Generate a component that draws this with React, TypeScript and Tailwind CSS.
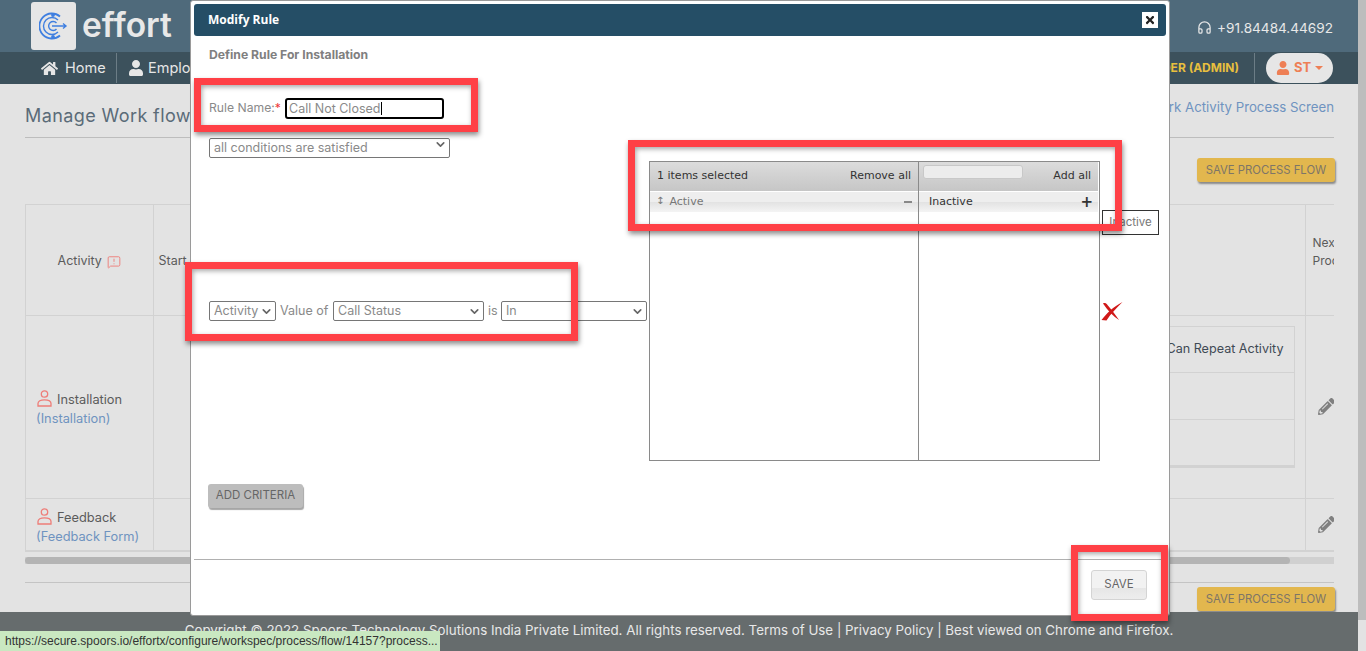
import React from "react";
import { FaHome, FaUser, FaPencilAlt, FaTimes } from "react-icons/fa";
import { Headphones, MessageSquareWarning, ChevronDown } from "lucide-react";

const font = "font-['Inter','Noto_Sans',sans-serif]";

function Logo() {
  return (
    <div className="w-[45px] h-[48px] bg-[#e6e6e6] rounded-[3px] flex items-center justify-center">
      <svg width="30" height="32" viewBox="0 0 30 32" fill="none" stroke="#3f7fe0" strokeWidth="1.4">
        <path d="M21 6.5A12.5 12.5 0 1 0 21 25.5" strokeWidth="1.8" />
        <path d="M19 10A8.5 8.5 0 1 0 19 22" />
        <path d="M17.5 13A4.5 4.5 0 1 0 17.5 19" />
        <path d="M13 16H27M24 13.5L27 16L24 18.5" />
        <circle cx="14" cy="5" r="1.2" fill="#3f7fe0" />
        <circle cx="14" cy="27" r="1.2" fill="#3f7fe0" />
      </svg>
    </div>
  );
}

function Sel({ label, w }: { label: string; w: string }) {
  return (
    <div className={`relative ${w}`}>
      <select
        defaultValue={label}
        className={`appearance-none w-full h-[20px] bg-white border border-[#767676] rounded-[2px] pl-[4px] text-[12.5px] leading-[18px] text-[#8a8a8a] outline-none ${font}`}
      >
        <option>{label}</option>
      </select>
      <ChevronDown size={13} strokeWidth={3} className="absolute right-[3px] top-[4px] text-[#666] pointer-events-none" />
    </div>
  );
}

function Mark({ cls }: { cls: string }) {
  return <div className={`absolute border-[7px] border-[#ff4046] shadow-[1px_3px_5px_rgba(0,0,0,0.45),inset_1px_2px_5px_rgba(0,0,0,0.35)] pointer-events-none ${cls}`} />;
}

function SaveFlow() {
  return (
    <button className="h-[24px] w-[138px] bg-[#e2b74e] rounded-[3px] text-[11.3px] text-[#7d7568] shadow-[1px_2px_2px_rgba(0,0,0,0.4)] whitespace-nowrap">
      SAVE PROCESS FLOW
    </button>
  );
}

function PersonIcon() {
  return (
    <svg width="15" height="17" viewBox="0 0 15 17" fill="none" stroke="#ee7d78" strokeWidth="1.3" className="mb-[2px]">
      <circle cx="7.5" cy="4" r="3.2" />
      <path d="M1 16V13.5C1 11 3.5 9.8 7.5 9.8C11.5 9.8 14 11 14 13.5V16Z" />
    </svg>
  );
}

function ActivityCell({ name, form }: { name: string; form: string }) {
  return (
    <div className="pl-[11px] text-[12.8px] leading-[19px]">
      <div className="flex items-end gap-[5px] text-[#5b5b5b]">
        <PersonIcon />
        <span>{name}</span>
      </div>
      <div className="text-[#6f93c0] text-[12.8px] -ml-px">({form})</div>
    </div>
  );
}

export default function App() {
  return (
    <div className={`relative w-[1366px] h-[651px] overflow-hidden bg-[#e3e3e3] flex ${font}`}>
      <div className="flex-1 min-w-0 flex flex-col">
        <header className="h-[52px] shrink-0 bg-[#4f6a7b] flex items-center justify-between pl-[31px] pr-[25px]">
          <div className="flex items-center gap-[7px]">
            <Logo />
            <span className="text-[33.5px] font-semibold text-[#e8e8e8] leading-none -ml-px">effort</span>
          </div>
          <div className="flex items-center gap-[5px] text-[13.6px] text-[#e8e8e8] pt-[4px]">
            <Headphones size={15} />
            <span>+91.84484.44692</span>
          </div>
        </header>

        <nav className="h-[32px] shrink-0 bg-[#3c515c] flex items-center justify-between pl-[41px] pr-[25px] text-[14.5px] text-[#e6e6e6]">
          <div className="flex items-center">
            <FaHome size={17} className="mr-[7px]" />
            <span className="w-[51px]">Home</span>
            <span className="w-px h-[30px] bg-[#6c7d86] mr-[11px]" />
            <FaUser size={16} className="mr-[4px]" />
            <span>Employee</span>
          </div>
          <div className="flex items-center">
            <span className="text-[12px] font-bold text-[#e8bf3e] mr-[15px]">LEADER (ADMIN)</span>
            <span className="w-px h-[30px] bg-[#6c7d86] mr-[11px]" />
            <span className="w-[67px] h-[30px] rounded-full bg-[#e6e6e6] flex items-center justify-center gap-[4px] text-[#ee7f55] font-bold text-[13px]">
              <FaUser size={14} />
              <span>ST</span>
              <span className="w-0 h-0 border-x-[4px] border-x-transparent border-t-[4px] border-t-[#ee7f55]" />
            </span>
          </div>
        </nav>

        <main className="flex-1 min-h-0 flex flex-col px-[25px] pr-[24px]">
          <div className="h-[54px] shrink-0 border-b border-[#bdbdbd] flex justify-between pt-[13px]">
            <h1 className="text-[18px] text-[#5a6b78] tracking-[0.4px] pt-[7px] leading-[24px]">Manage Work flow</h1>
            <span className="text-[13.25px] text-[#6f93c0] leading-[20px]">Work Activity Process Screen</span>
          </div>
          <div className="h-[66px] shrink-0 flex justify-end pt-[20px] -mr-px">
            <SaveFlow />
          </div>

          <div className="h-[348px] shrink-0 overflow-hidden border-t border-l border-[#d2d2d2]">
            <table className="table-fixed w-[1340px] border-collapse text-[12.5px] text-[#5b5b5b]">
              <colgroup>
                <col className="w-[127px]" />
                <col className="w-[847px]" />
                <col className="w-[305px]" />
                <col className="w-[61px]" />
              </colgroup>
              <tbody>
                <tr className="h-[110px] border-b border-[#d2d2d2]">
                  <td className="border-r border-[#d2d2d2] text-center pt-[4px]">
                    <span className="inline-flex items-center gap-[5px]">
                      Activity
                      <MessageSquareWarning size={14} strokeWidth={1.6} className="text-[#ee7d78]" />
                    </span>
                  </td>
                  <td className="pl-[5px] pt-[4px]">Start</td>
                  <td />
                  <td className="border-l border-[#d2d2d2] pl-[7px] pr-[8px] pb-[16px] leading-[18px] text-[12px] text-left">Next Process</td>
                </tr>
                <tr className="h-[183px] border-b border-[#d2d2d2]">
                  <td className="border-r border-[#d2d2d2] pt-[5px]">
                    <ActivityCell name="Installation" form="Installation" />
                  </td>
                  <td />
                  <td className="pr-[10px] align-top pt-[10px]">
                    <div className="border border-[#d2d2d2] border-b-[3px] h-[142px] flex flex-col text-[#3f4a55]">
                      <div className="h-[46px] border-b border-[#d2d2d2] flex items-center justify-end pr-[10px] text-[12.6px]">Can Repeat Activity</div>
                      <div className="h-[47px] border-b border-[#d2d2d2]" />
                      <div className="flex-1" />
                    </div>
                  </td>
                  <td className="border-l border-[#d2d2d2] pl-[12px]">
                    <FaPencilAlt size={17} className="text-[#808080]" />
                  </td>
                </tr>
                <tr className="h-[52px]">
                  <td className="border-r border-[#d2d2d2] pt-[6px]">
                    <ActivityCell name="Feedback" form="Feedback Form" />
                  </td>
                  <td />
                  <td />
                  <td className="border-l border-[#d2d2d2] pl-[12px]">
                    <FaPencilAlt size={17} className="text-[#808080]" />
                  </td>
                </tr>
              </tbody>
            </table>
          </div>
          <div className="h-[2px] shrink-0 bg-[#d2d2d2] -mt-[2px]" />
          <div className="mt-[5px] h-[7px] shrink-0 bg-[#d0d0d0]">
            <div className="h-full w-[1265px] rounded-full bg-[#b4b4b4]" />
          </div>
          <div className="mt-[18px] h-px shrink-0 bg-[#c4c4c4]" />
          <div className="mt-[4px] shrink-0 flex justify-end -mr-px">
            <SaveFlow />
          </div>
        </main>

        <footer className="h-[39px] shrink-0 bg-[#666c6d] text-[13.35px] text-[#e8e8e8] text-center pt-[8px] whitespace-nowrap">
          Copyright © 2022 Spoors Technology Solutions India Private Limited. All rights reserved. Terms of Use | Privacy Policy | Best viewed on Chrome and Firefox.
        </footer>
      </div>

      <div className="w-[8px] shrink-0 bg-[#e3e3e3] flex flex-col">
        <div className="h-[620px] bg-[#bdbdbd]" />
      </div>

      {/* Modal */}
      <div className="absolute left-[190px] top-0 w-[980px] h-[616px] bg-white border border-[#9a9a9a] rounded-[3px] px-[3px] pt-[3px] flex flex-col">
        <div className="h-[32px] shrink-0 bg-[#254e66] rounded-[3px] flex items-center justify-between pl-[14px] pr-[8px]">
          <span className="text-[12px] font-bold text-white font-['Open_Sans',sans-serif]">Modify Rule</span>
          <span className="w-[16px] h-[16px] bg-white flex items-center justify-center">
            <FaTimes size={12} className="text-[#222]" />
          </span>
        </div>

        <div className="flex-1 min-h-0 pl-[15px] flex flex-col">
          <div className="mt-[10px] text-[12.2px] font-bold text-[#808080] leading-[18px]">Define Rule For Installation</div>
          <div className="mt-[34px] flex items-center text-[12.2px] text-[#8a8a8a] h-[21px]">
            <span className="w-[76px] whitespace-nowrap">Rule Name:<span className="text-[#e33]">*</span></span>
            <div className="relative w-[159px]">
              <input
                defaultValue="Call Not Closed"
                className={`w-full h-[21px] border-2 border-black rounded-[3px] px-[2px] text-[12.5px] text-[#8a8a8a] outline-none ${font}`}
              />
              <span className="absolute left-[96px] top-[4px] w-px h-[13px] bg-black" />
            </div>
          </div>
          <div className="mt-[15px]">
            <Sel label="all conditions are satisfied" w="w-[241px]" />
          </div>

          <div className="mt-[3px] flex items-center">
            <div className="flex items-center gap-[4px] text-[12.5px] text-[#8a8a8a] w-[440px] whitespace-nowrap">
              <Sel label="Activity" w="w-[67px]" />
              <span className="w-[49px]">Value of</span>
              <Sel label="Call Status" w="w-[151px]" />
              <span className="w-[9px]">is</span>
              <Sel label="In" w="w-[146px]" />
            </div>

            <div className="w-[451px] h-[300px] border border-[#8a8a8a] flex text-[11px] text-[#333] font-['DejaVu_Sans',sans-serif]">
              <div className="w-[269px] border-r border-[#8a8a8a] flex flex-col">
                <div className="h-[29px] bg-gradient-to-b from-[#dcdcdc] to-[#c6c6c6] flex items-center justify-between pl-[7px] pr-[7px]">
                  <span>1 items selected</span>
                  <span>Remove all</span>
                </div>
                <div className="mt-px h-[20px] bg-[linear-gradient(#eeeeee_50%,#e2e2e2_50%,#f4f4f4)] flex items-center justify-between pl-[6px] pr-[6px] text-[#777]">
                  <span className="flex items-center gap-[5px]">
                    <span className="text-[10px] leading-none -mt-[3px]">↕</span>
                    Active
                  </span>
                  <span className="w-[8px] h-[2px] bg-[#888]" />
                </div>
              </div>
              <div className="flex-1 flex flex-col">
                <div className="h-[29px] bg-gradient-to-b from-[#dcdcdc] to-[#c6c6c6] flex items-center justify-between pl-[4px] pr-[7px] mr-px">
                  <span className="w-[100px] h-[14px] -mt-[10px] bg-[#ececec] border border-[#c8c8c8] rounded-[3px]" />
                  <span>Add all</span>
                </div>
                <div className="mt-px mr-px h-[20px] bg-[linear-gradient(#eeeeee_50%,#e2e2e2_50%,#f4f4f4)] flex items-center justify-between pl-[10px] pr-[5px]">
                  <span>Inactive</span>
                  <span className="text-[15px] font-bold leading-none">+</span>
                </div>
              </div>
            </div>

            <svg width="22" height="20" viewBox="0 0 22 20" className="ml-[1px]">
              <path d="M0.5 19C6 12 12 6 21.5 1C16 7 10 12 5.5 19.5Z" fill="#d01818" />
              <path d="M2 2.5C3.5 1.5 5 2 6.5 4C10 8 14 13 18 19C12.5 15.5 7 10 2 2.5Z" fill="#d01818" />
            </svg>
          </div>

          <div className="mt-[20px]">
            <button className="w-[95px] h-[24px] -ml-px bg-[#bdbdbd] rounded-[3px] text-[11.5px] text-[#666] shadow-[1px_2px_1px_rgba(0,0,0,0.35)]">
              ADD CRITERIA
            </button>
          </div>
        </div>

        <div className="h-[56px] shrink-0 border-t border-[#b0b0b0] flex justify-end pt-[10px] pr-[19px]">
          <button className="w-[56px] h-[30px] rounded-[3px] border border-[#d4d4d4] bg-[linear-gradient(#f2f2f2_60%,#e6e6e6_60%,#ededed)] text-[11.5px] text-[#666]">
            SAVE
          </button>
        </div>
      </div>

      {/* Tooltip */}
      <div className="absolute left-[1102px] top-[210px] w-[57px] h-[25px] border border-[#333] bg-white text-[11.5px] text-[#777] flex items-center justify-center">
        Inactive
      </div>

      <Mark cls="left-[194px] top-[78px] w-[284px] h-[54px]" />
      <Mark cls="left-[628px] top-[140px] w-[494px] h-[91px]" />
      <Mark cls="left-[185px] top-[262px] w-[393px] h-[79px]" />
      <Mark cls="left-[1071px] top-[545px] w-[97px] h-[76px]" />

      {/* Browser status bar */}
      <div className="absolute left-0 bottom-0 w-[440px] h-[20px] bg-[#c9e8c1] text-[12px] text-[#333] pl-[5px] leading-[20px] whitespace-nowrap overflow-hidden font-['Liberation_Sans',sans-serif]">
        https://secure.spoors.io/effortx/configure/workspec/process/flow/14157?process...
      </div>
    </div>
  );
}
